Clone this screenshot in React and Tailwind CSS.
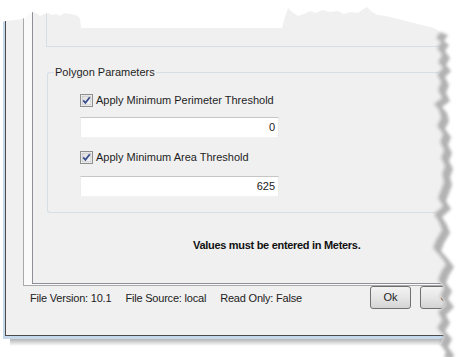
import React from 'react';

// torn edges of the screenshot
const topEdge = [
  [0, 0], [0, 22], [6, 21], [15, 20], [22, 19], [24, 18], [28, 15], [32, 12], [36, 13], [40, 16],
  [44, 14], [48, 13], [52, 15], [56, 14], [60, 16], [64, 13], [70, 14], [76, 15], [80, 18], [81, 28],
  [282, 28], [284, 20], [288, 8], [292, 12], [298, 16], [304, 14], [310, 11], [316, 13], [322, 10],
  [330, 12], [338, 11], [344, 14], [350, 12], [358, 13], [362, 10], [367, 7], [372, 12], [378, 15],
  [386, 16], [394, 18], [402, 20], [410, 22], [418, 24], [426, 26], [434, 28], [440, 32], [474, 32], [474, 0],
];

const rightEdge = [
  [440, 32], [436, 38], [441, 42], [437, 48], [442, 55], [438, 62], [443, 68], [437, 74], [441, 82],
  [438, 90], [442, 98], [434, 104], [439, 110], [441, 118], [437, 126], [443, 134], [440, 142],
  [444, 150], [441, 158], [445, 166], [442, 174], [444, 182], [441, 190], [438, 198], [443, 206],
  [434, 214], [439, 222], [442, 230], [436, 240], [433, 248], [440, 256], [446, 264], [441, 272],
  [438, 280], [444, 288], [440, 296], [446, 304], [438, 312], [442, 320], [437, 328], [444, 336],
  [440, 344], [446, 352], [444, 357],
];

const pts = (arr) => arr.map(([x, y]) => `${x},${y}`).join(' ');

const TornEdges = () => {
  const whiteRight = [...rightEdge, [474, 357], [474, 32]];
  const shadow = [...rightEdge, ...rightEdge.slice().reverse().map(([x, y]) => [x + 8, y + 3])];
  return (
    <svg className="absolute inset-0 pointer-events-none" width="474" height="357" viewBox="0 0 474 357">
      <defs>
        <filter id="blur" x="-20%" y="-20%" width="140%" height="140%">
          <feGaussianBlur stdDeviation="1.4" />
        </filter>
      </defs>
      <polygon points={pts(topEdge)} fill="#ffffff" />
      <polygon points={pts(whiteRight)} fill="#ffffff" />
      <polygon points={pts(shadow)} fill="#9a9a9a" opacity="0.75" filter="url(#blur)" />
    </svg>
  );
};

const Checkbox = () => (
  <svg width="13" height="13" viewBox="0 0 13 13" className="shrink-0">
    <defs>
      <linearGradient id="cbg" x1="0" y1="0" x2="1" y2="1">
        <stop offset="0" stopColor="#dcdcdc" />
        <stop offset="1" stopColor="#f8f8f8" />
      </linearGradient>
    </defs>
    <rect x="0.5" y="0.5" width="12" height="12" fill="#ffffff" stroke="#8e8f8f" />
    <rect x="2" y="2" width="9" height="9" fill="url(#cbg)" stroke="#b0b0b0" strokeWidth="0.6" />
    <path d="M3.2 6.4 L5.4 8.8 L9.8 3.2" fill="none" stroke="#3a4f8e" strokeWidth="1.8" />
  </svg>
);

const TextBox = ({ value }) => (
  <div className="w-[199px] h-[21px] bg-white border border-t-[#c6c6c6] border-x-[#ececec] border-b-[#f2f2f2] flex items-center justify-end pr-[3px] text-[11px] text-[#222]">
    {value}
  </div>
);

const CheckRow = ({ label }) => (
  <div className="flex items-center gap-[3px] h-[14px]">
    <Checkbox />
    <span className="text-[11px] text-[#1e1e1e] leading-none">{label}</span>
  </div>
);

const btn = "h-[23px] rounded-[3px] border border-[#707070] bg-gradient-to-b from-[#f3f3f3] via-[#e6e6e6] to-[#d4d4d4] text-[11px] text-[#1e1e1e]";

export default function App() {
  return (
    <div className="relative w-[474px] h-[357px] overflow-hidden bg-white" style={{ fontFamily: '"Liberation Sans", Arial, sans-serif' }}>
      {/* window */}
      <div className="ml-[3px] w-[540px] h-[339px] border-l-2 border-b-[3px] border-[#c6d9ec]">
        <div className="h-full border-l border-b border-[#4b4b4b] bg-[#f0f0f0] flex flex-col">
          {/* tab frame */}
          <div className="ml-[17px] h-[286px] border-l border-b border-[#a9a9a9] bg-[#fafafa] pl-[8px] pb-[1px]">
            <div className="h-full border-l border-b border-[#8d9099] bg-[#f0f0f0] flex flex-col">
              {/* previous group (torn) */}
              <div className="ml-[13px] h-[47px] border-l border-b border-[#d5dfe5]" />

              {/* polygon parameters */}
              <div className="mt-[25px] ml-[14px] h-[141px] border border-r-0 border-[#d5dfe5] rounded-l-[3px] flex flex-col">
                <div className="-mt-[8px] ml-[6px] px-[1px] w-fit h-[14px] bg-[#f0f0f0] text-[11px] leading-[14px] text-[#1e1e1e]">
                  Polygon Parameters
                </div>
                <div className="pl-[32px] flex flex-col">
                  <div className="mt-[14px]"><CheckRow label="Apply Minimum Perimeter Threshold" /></div>
                  <div className="mt-[10px]"><TextBox value="0" /></div>
                  <div className="mt-[12px]"><CheckRow label="Apply Minimum Area Threshold" /></div>
                  <div className="mt-[12px]"><TextBox value="625" /></div>
                </div>
              </div>

              <div className="mt-[25px] pl-[160px] text-[11px] font-bold text-[#111] leading-[14px] tracking-[-0.3px]">
                Values must be entered in Meters.
              </div>
            </div>
          </div>

          {/* status bar */}
          <div className="flex items-start">
            <div className="ml-[24px] mt-[5px] flex gap-[14px] text-[11px] text-[#222] leading-[14px] tracking-[-0.2px]">
              <span>File Version: 10.1</span>
              <span>File Source: local</span>
              <span>Read Only: False</span>
            </div>
            <div className="ml-auto mr-[48px] flex gap-[9px]">
              <button className={`w-[41px] ${btn}`}>Ok</button>
              <button className={`w-[75px] ${btn}`}>Cancel</button>
            </div>
          </div>
        </div>
      </div>
      {/* window drop shadow */}
      <div className="ml-[10px] w-[436px] h-[7px] bg-gradient-to-b from-[#b4b4b4] to-white" />

      <TornEdges />
    </div>
  );
}
